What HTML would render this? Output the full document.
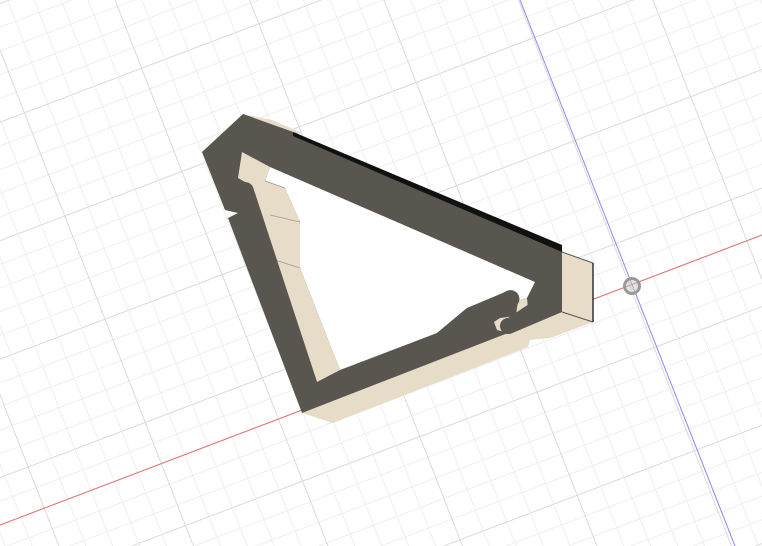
<!DOCTYPE html>
<html><head><style>html,body{margin:0;padding:0;background:#fff;overflow:hidden;width:762px;height:546px}svg{display:block}</style></head>
<body>
<svg id="s" width="762" height="546" viewBox="0 0 762 546" xmlns="http://www.w3.org/2000/svg">
<rect width="762" height="546" fill="#fff"/>
<g id="grid"></g>
<line x1="0" y1="525" x2="762" y2="235" stroke="#e07070" stroke-width="1"/>
<line x1="520" y1="0" x2="735" y2="546" stroke="#8a8af0" stroke-width="1"/>
<polygon points="302,413 333,423 528,347 530,340 550,338 593,322 593,263 562,252 562,312" fill="#e6dcc8"/>
<polygon points="243,114 272,120 302,133 293,135" fill="#e6dcc8"/>
<line x1="562" y1="312" x2="593" y2="322" stroke="#555" stroke-width="1"/>
<line x1="562" y1="252" x2="593" y2="263" stroke="#555" stroke-width="1"/>
<line x1="593" y1="263" x2="593" y2="322" stroke="#333" stroke-width="1.5"/>
<polygon points="243,114 202,152 225,210 238,213 228,218 302,413 562,312 562,250 296,133" fill="#58564f"/>
<polygon points="293,132 562,245 562,252 293,136" fill="#111"/>
<polygon points="270,167 535,282 527,298 518,300 505,293 467,308 437,333 340,370 300,268 300,222 285,188 265,181" fill="#fff"/>
<polygon points="242,152 270,167 265,181 285,188 300,222 300,268 340,370 317,382 252,186 238,178" fill="#e6dcc8"/>
<line x1="285" y1="188" x2="265" y2="181" stroke="#999" stroke-width="0.8"/>
<line x1="300" y1="222" x2="270" y2="215" stroke="#999" stroke-width="0.8"/>
<line x1="300" y1="268" x2="275" y2="260" stroke="#999" stroke-width="0.8"/>
<path d="M317,382 L253,187 A9,9 0 0 0 236,192 L240,214 L300,405 Z" fill="#58564f"/>
<polygon points="527,298 518,300 516,316 500,318 494,322 497,330 512,334 530,330" fill="#e6dcc8"/>
<path d="M437,333 L467,308 L505,292 A8,8 0 0 1 516,306 L470,322 L400,360 Z" fill="#58564f"/>
<circle cx="508" cy="326" r="8" fill="#58564f"/>
<polygon points="508,318 535,300 562,290 562,312 510,334" fill="#58564f"/>
<circle cx="632" cy="286" r="7.5" fill="#c8c8c8" fill-opacity="0.5" stroke="#999" stroke-width="3"/>
</svg>
<script>
var g=document.getElementById('grid'),h='';
for(var k=-30;k<40;k++){var c=525+(k-17)*23.7;var maj=((k%5)+5)%5==0;
h+='<line x1="0" y1="'+c+'" x2="762" y2="'+(c-0.38*762)+'" stroke="'+(maj?'#dadada':'#eeeeee')+'" stroke-width="1"/>';}
for(var k=-30;k<40;k++){var d=518.5-(15-k)*26.9;var maj=((k%5)+5)%5==0;
h+='<line x1="'+d+'" y1="0" x2="'+(d+0.39*546)+'" y2="546" stroke="'+(maj?'#dadada':'#eeeeee')+'" stroke-width="1"/>';}
g.innerHTML=h;
</script>
</body></html>
